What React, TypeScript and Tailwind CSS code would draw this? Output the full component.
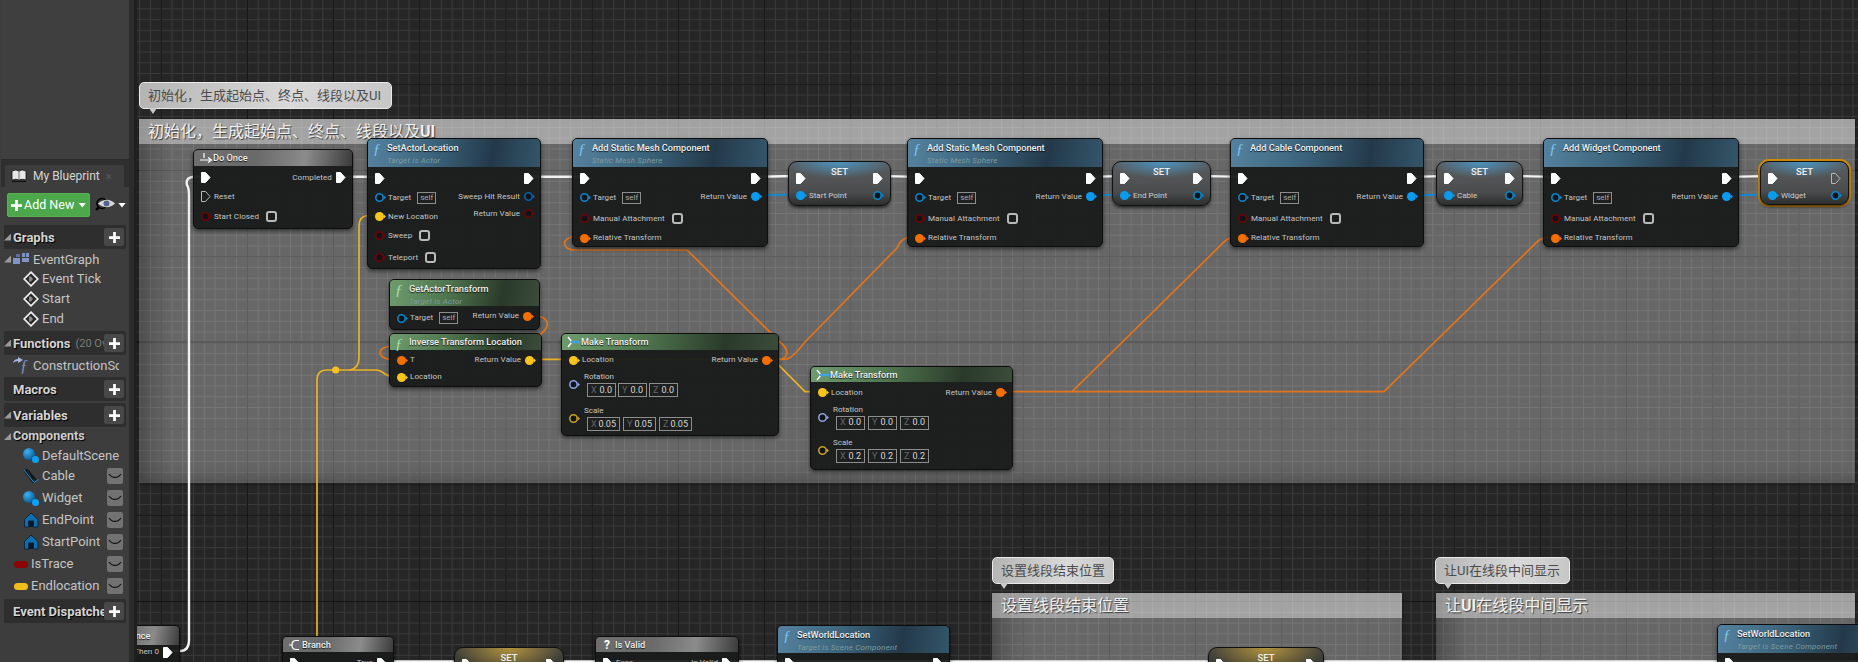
import type { ReactNode } from 'react';

const font = "font-['Roboto',_'Noto_Sans_CJK_SC',_sans-serif]";

// ---------- pins ----------
function Exec({ hollow }: { hollow?: boolean }) {
  return (
    <svg width="13" height="13" viewBox="0 0 13 13" className="shrink-0">
      <path
        d="M2.5 1.5H6.5L11 6.5L6.5 11.5H2.5Z"
        fill={hollow ? 'none' : '#ffffff'}
        stroke={hollow ? '#b8b8b8' : '#ffffff'}
        strokeWidth="1"
        strokeLinejoin="round"
      />
    </svg>
  );
}

function Dot({ color, hollow }: { color: string; hollow?: boolean }) {
  return (
    <svg width="13" height="13" viewBox="0 0 13 13" className="shrink-0">
      <path d="M10.8 4.6L13 6.5L10.8 8.4Z" fill={color} />
      <circle cx="6.5" cy="6.5" r={hollow ? 3.7 : 4.5} fill={hollow ? '#101418' : color} stroke={color} strokeWidth={hollow ? 1.6 : 0} />
    </svg>
  );
}

const objFill = <Dot color="#0a9bef" />;
const objHollow = <Dot color="#0a86cc" hollow />;
const boolPin = <Dot color="#6d0505" hollow />;
const vecFill = <Dot color="#f9c51d" />;
const xfFill = <Dot color="#f56e00" />;

function Check() {
  return <span className="ml-[5px] h-[11px] w-[11px] shrink-0 rounded-[3px] border-2 border-[#b9b9b9] bg-[#1b1d1c]" />;
}

function Self() {
  return (
    <span className="ml-[4px] flex h-[12px] w-[19px] shrink-0 items-center justify-center border border-[#8d8d8d] text-[8px] leading-none text-[#a9a9a9]">
      self
    </span>
  );
}

function Row({ h, pin, label, right, children }: { h: string; pin: ReactNode; label?: string; right?: boolean; children?: ReactNode }) {
  return (
    <div className={`flex items-center gap-[2px] ${h} ${right ? 'flex-row-reverse pr-[5px]' : 'pl-[5px]'}`}>
      {pin}
      {label && <span className="whitespace-nowrap text-[8px] leading-none tracking-[0.1px] text-[#c6c6c6]">{label}</span>}
      {children}
    </div>
  );
}

function Vec({ label, w, gap, values }: { label: string; w: string; gap: string; values: string[] }) {
  const axes = ['X', 'Y', 'Z'];
  return (
    <div className="ml-[2px] flex flex-col">
      <span className="mb-[1px] text-[8px] leading-[10px] text-[#c6c6c6]">{label}</span>
      <div className={`ml-[3px] flex ${gap}`}>
        {values.map((v, i) => (
          <span key={axes[i]} className={`flex h-[14px] items-center justify-between border border-[#8d8d8d] px-[3px] text-[9px] leading-none text-[#d8d8d8] ${w}`}>
            <span className="text-[#666666]">{axes[i]}</span>
            {v}
          </span>
        ))}
      </div>
    </div>
  );
}

// ---------- node headers ----------
const tones: Record<string, string> = {
  blue: 'bg-[linear-gradient(100deg,#55829f_0%,#3c647c_38%,#23394a_72%,#34566a_100%)]',
  green: 'bg-[linear-gradient(100deg,#6f9c6f_0%,#4f764f_38%,#2a3a2a_75%,#3b4c3b_100%)]',
  gray: 'bg-[linear-gradient(100deg,#6e6e6e_0%,#6a6a6a_40%,#8b8b8b_70%,#3b3b3b_100%)]',
};

function FuncIcon({ tone }: { tone: string }) {
  return (
    <span
      className={`absolute left-[5px] top-[1px] font-['Liberation_Serif',_serif] text-[15px] italic leading-[18px] ${
        tone === 'blue' ? 'text-[#7fc4f2]' : 'text-[#a6e0a6]'
      }`}
    >
      ƒ
    </span>
  );
}

function MacroIcon() {
  return (
    <svg width="14" height="12" viewBox="0 0 14 12" className="absolute left-[5px] top-[2px]">
      <path d="M1 1L5 6L1 11" fill="none" stroke="#ffffff" strokeWidth="1.4" />
      <path d="M4 6H13" stroke="#3fa0e8" strokeWidth="2.4" />
    </svg>
  );
}

function DoOnceIcon() {
  return (
    <svg width="14" height="12" viewBox="0 0 14 12" className="absolute left-[5px] top-[2px]">
      <path d="M1 8H11M9 5.5L12.5 8L9 10.5M5 1V6" fill="none" stroke="#ffffff" strokeWidth="1.2" />
    </svg>
  );
}

function BranchIcon() {
  return (
    <svg width="14" height="12" viewBox="0 0 14 12" className="absolute left-[5px] top-[2px]">
      <path d="M11 1.5H8C5 1.5 4 4 4 6S5 10.5 8 10.5H11M1 6H4" fill="none" stroke="#ffffff" strokeWidth="1.2" />
    </svg>
  );
}

type NodeProps = {
  box: string;
  tone: string;
  header: string;
  title: string;
  sub?: string;
  icon: ReactNode;
  titleTop: string;
  left?: ReactNode;
  right?: ReactNode;
};

function Node({ box, tone, header, title, sub, icon, titleTop, left, right }: NodeProps) {
  return (
    <div className={`absolute flex flex-col rounded-[5px] border border-[#0d0d0d] bg-[#191b1a]/95 shadow-[0_2px_4px_rgba(0,0,0,0.55)] ${box}`}>
      <div className={`relative shrink-0 rounded-t-[4px] pl-[19px] ${header} ${tones[tone]} ${titleTop}`}>
        {icon}
        <div className="whitespace-nowrap text-[9.2px] font-medium leading-[11px] text-[#f1f1f1] [text-shadow:0_1px_1px_rgba(0,0,0,0.8)]">{title}</div>
        {sub && <div className="mt-[2px] whitespace-nowrap text-[8px] italic leading-[11px] tracking-[0.2px] text-[#7f9c9c]">{sub}</div>}
      </div>
      <div className="flex justify-between">
        <div className="flex flex-col">{left}</div>
        <div className="flex flex-col">{right}</div>
      </div>
    </div>
  );
}

function SetNode({ box, label, yellow, lastHollow }: { box: string; label: string; yellow?: boolean; lastHollow?: boolean }) {
  return (
    <div
      className={`absolute rounded-[9px] border border-[#111111] shadow-[0_2px_3px_rgba(0,0,0,0.6)] ${box} ${
        yellow
          ? 'bg-[radial-gradient(ellipse_50%_55%_at_50%_0%,#b1933c_0%,#b1933c00_100%),linear-gradient(#46453c,#2c2c28)]'
          : 'bg-[radial-gradient(ellipse_55%_38%_at_50%_0%,#4a93bf_0%,#4a93bf00_100%),linear-gradient(#5a5c5d_0%,#4a4c4d_70%,#2d2e2e_100%)]'
      }`}
    >
      <div className="absolute inset-x-0 top-[4px] text-center text-[9.5px] font-medium leading-[11px] text-[#eeeeee]">SET</div>
      <div className="mt-[4px] flex h-[24px] items-center justify-between pl-[5px] pr-[6px]">
        <Exec />
        <Exec hollow={lastHollow} />
      </div>
      <div className="flex h-[11px] items-center justify-between pl-[5px] pr-[6px]">
        <div className="flex items-center gap-[2px]">
          {objFill}
          <span className="whitespace-nowrap text-[8px] leading-none text-[#cfcfcf]">{label}</span>
        </div>
        {objHollow}
      </div>
    </div>
  );
}

// ---------- comments ----------
function Bubble({ box, tail, children }: { box: string; tail: string; children: ReactNode }) {
  return (
    <div className={`absolute flex items-center whitespace-nowrap rounded-[5px] border border-[#e9e9e9] bg-[linear-gradient(100deg,#b4b4b4,#d9d9d9_60%,#c6c6c6)] pl-[8px] text-[13px] leading-none text-[#4b4b4b] ${box}`}>
      {children}
      <span className={`absolute top-full h-[6px] w-[8px] bg-[#c9c9c9] [clip-path:polygon(0_0,100%_0,50%_100%)] ${tail}`} />
    </div>
  );
}

function Comment({ box, children }: { box: string; children: ReactNode }) {
  return (
    <div className={`absolute bg-white/30 shadow-[inset_26px_0_26px_-14px_rgba(0,0,0,0.28),inset_0_-16px_20px_-12px_rgba(0,0,0,0.22),0_1px_3px_rgba(0,0,0,0.5)] ${box}`}>
      <div className="flex h-[25px] items-center whitespace-nowrap bg-white/40 pl-[9px] text-[16px] leading-none text-[#f0f0f0] [text-shadow:1px_1px_1px_rgba(0,0,0,0.65)]">
        {children}
      </div>
    </div>
  );
}

// ---------- wires ----------
const whiteWires = [
  'M172 651H180Q189 651 189 640V195Q189 188 187 185Q185 177 195 176.7H205',
  'M342 176.7H378',
  'M529 176.7H583',
  'M756 176.7C780 176.7 782 176 800 176',
  'M878 176C896 176 900 176.7 918 176.7',
  'M1090 176.7C1106 176.7 1110 176 1126 176',
  'M1197 176C1220 176 1222 176.7 1241 176.7',
  'M1412 176.7C1430 176.7 1432 176 1449 176',
  'M1511 176C1530 176 1534 176.7 1555 176.7',
  'M1728 176.7C1750 176.7 1752 176 1773 176',
  'M393 661.5H1858',
];
const blueWires = [
  'M755 195.3C776 195.3 778 194.3 800 194.3',
  'M1090 195.3C1108 195.3 1110 194.3 1126 194.3',
  'M1412 195.3C1430 195.3 1432 194.3 1449 194.3',
  'M1728 195.3C1750 195.3 1752 194.3 1773 194.3',
];
const yellowWires = [
  'M317 640V380Q317 370 327 370H376Q380 370 385 374Q389 376.7 397 376.7',
  'M350 370Q359 368 359 358V226Q359 216 368 215.5H378',
  'M529 359.3H572',
  'M572 359.3H773L805 391.7H821',
];
const orangeWires = [
  'M527 316.3C548 314 552 324 542 333L528 346H393C376 346 376 359.3 392 359.3H400',
  'M765 359.3H778C790 359.3 788 349 782 344L687 250H575C561 250 561 237 575 236.7H584',
  'M778 359.3H786C795 357 800 347 806 341L897 248C900 240 905 236.7 918 236.7',
  'M998 391.7H1072L1225 241Q1230 236.7 1241 236.7',
  'M1072 391.7H1384L1538 241Q1543 236.7 1555 236.7',
];

function MeshNode({ box, title, sub }: { box: string; title: string; sub: string }) {
  return (
    <Node
      box={box}
      tone="blue"
      header="h-[28px]"
      titleTop="pt-[3px]"
      title={title}
      sub={sub}
      icon={<FuncIcon tone="blue" />}
      left={
        <>
          <Row h="h-[22px]" pin={<Exec />} />
          <Row h="h-[17px]" pin={objHollow} label="Target">
            <Self />
          </Row>
          <Row h="h-[25px]" pin={boolPin} label="Manual Attachment">
            <Check />
          </Row>
          <Row h="h-[14px]" pin={xfFill} label="Relative Transform" />
        </>
      }
      right={
        <>
          <Row h="h-[22px]" right pin={<Exec />} />
          <Row h="h-[15px]" right pin={objFill} label="Return Value" />
        </>
      }
    />
  );
}

function Canvas() {
  return (
    <div className="relative flex-1 overflow-hidden bg-[#262626]">
      <div className="absolute left-[-137px] top-0 h-[662px] w-[1858px]">
        <svg width="1858" height="662" className="absolute left-0 top-0">
          <defs>
            <pattern id="minor" x="160.7" y="170" width="10.775" height="10.775" patternUnits="userSpaceOnUse">
              <path d="M0 0.5H10.775M0.5 0V10.775" stroke="#3a3a3a" strokeWidth="1" />
            </pattern>
            <pattern id="major" x="160.7" y="170" width="86.2" height="86.2" patternUnits="userSpaceOnUse">
              <path d="M0 0.5H86.2M0.5 0V86.2" stroke="#131313" strokeWidth="1" />
            </pattern>
          </defs>
          <rect width="1858" height="662" fill="url(#minor)" />
          <rect width="1858" height="662" fill="url(#major)" />
          <path d="M0 342H1858" stroke="#101010" strokeWidth="1.5" />
        </svg>

        <Comment box="left-[139px] top-[119px] h-[364px] w-[1716px]">
          初始化，生成起始点、终点、线段以及<b>UI</b>
        </Comment>
        <Comment box="left-[992px] top-[593px] h-[100px] w-[410px]">设置线段结束位置</Comment>
        <Comment box="left-[1436px] top-[593px] h-[100px] w-[419px]">
          让<b>UI</b>在线段中间显示
        </Comment>

        <Bubble box="left-[139px] top-[82px] h-[27px] w-[253px]" tail="left-[9px]">
          初始化，生成起始点、终点、线段以及UI
        </Bubble>
        <Bubble box="left-[992px] top-[557px] h-[27px] w-[122px]" tail="left-[7px]">
          设置线段结束位置
        </Bubble>
        <Bubble box="left-[1435px] top-[557px] h-[27px] w-[135px]" tail="left-[8px]">
          让UI在线段中间显示
        </Bubble>

        <svg width="1858" height="662" className="absolute left-0 top-0" fill="none" strokeLinecap="round">
          {yellowWires.map((d) => (
            <path key={d} d={d} stroke="#eab226" strokeWidth="1.7" />
          ))}
          {orangeWires.map((d) => (
            <path key={d} d={d} stroke="#e2741a" strokeWidth="1.7" />
          ))}
          {blueWires.map((d) => (
            <path key={d} d={d} stroke="#0a8fdc" strokeWidth="1.7" />
          ))}
          {whiteWires.map((d) => (
            <path key={d} d={d} stroke="#f2f2f2" strokeWidth="2.4" />
          ))}
          <circle cx="335.7" cy="370" r="3.6" fill="#f5c21f" />
        </svg>

        <Node
          box="left-[193px] top-[149px] h-[80px] w-[160px]"
          tone="gray"
          header="h-[16px]"
          titleTop="pt-[2px]"
          title="Do Once"
          icon={<DoOnceIcon />}
          left={
            <>
              <Row h="h-[23px]" pin={<Exec />} />
              <Row h="h-[15px]" pin={<Exec hollow />} label="Reset" />
              <Row h="h-[25px]" pin={boolPin} label="Start Closed">
                <Check />
              </Row>
            </>
          }
          right={<Row h="h-[23px]" right pin={<Exec />} label="Completed" />}
        />

        <Node
          box="left-[367px] top-[138px] h-[131px] w-[174px]"
          tone="blue"
          header="h-[28px]"
          titleTop="pt-[3px]"
          title="SetActorLocation"
          sub="Target is Actor"
          icon={<FuncIcon tone="blue" />}
          left={
            <>
              <Row h="h-[22px]" pin={<Exec />} />
              <Row h="h-[17px]" pin={objHollow} label="Target">
                <Self />
              </Row>
              <Row h="h-[21px]" pin={vecFill} label="New Location" />
              <Row h="h-[17px]" pin={boolPin} label="Sweep">
                <Check />
              </Row>
              <Row h="h-[27px]" pin={boolPin} label="Teleport">
                <Check />
              </Row>
            </>
          }
          right={
            <>
              <Row h="h-[22px]" right pin={<Exec />} />
              <Row h="h-[15px]" right pin={<Dot color="#0a5fb0" hollow />} label="Sweep Hit Result" />
              <Row h="h-[19px]" right pin={boolPin} label="Return Value" />
            </>
          }
        />

        <MeshNode box="left-[572px] top-[138px] h-[109px] w-[196px]" title="Add Static Mesh Component" sub="Static Mesh Sphere" />
        <SetNode box="left-[788px] top-[161px] h-[45px] w-[103px]" label="Start Point" />
        <MeshNode box="left-[907px] top-[138px] h-[109px] w-[196px]" title="Add Static Mesh Component" sub="Static Mesh Sphere" />
        <SetNode box="left-[1112px] top-[161px] h-[45px] w-[99px]" label="End Point" />
        <MeshNode box="left-[1230px] top-[138px] h-[109px] w-[194px]" title="Add Cable Component" sub="" />
        <SetNode box="left-[1436px] top-[161px] h-[45px] w-[87px]" label="Cable" />
        <MeshNode box="left-[1543px] top-[138px] h-[109px] w-[196px]" title="Add Widget Component" sub="" />
        <div className="absolute left-[1758px] top-[159px] h-[48px] w-[93px] rounded-[11px] border-2 border-[#cf8a06]" />
        <SetNode box="left-[1760px] top-[161px] h-[44px] w-[89px]" label="Widget" lastHollow />

        <Node
          box="left-[389px] top-[279px] h-[51px] w-[151px]"
          tone="green"
          header="h-[26px]"
          titleTop="pt-[3px]"
          title="GetActorTransform"
          sub="Target is Actor"
          icon={<FuncIcon tone="green" />}
          left={
            <Row h="h-[24px]" pin={objHollow} label="Target">
              <Self />
            </Row>
          }
          right={<Row h="h-[20px]" right pin={xfFill} label="Return Value" />}
        />

        <Node
          box="left-[389px] top-[333px] h-[54px] w-[153px]"
          tone="green"
          header="h-[16px]"
          titleTop="pt-[2px]"
          title="Inverse Transform Location"
          icon={<FuncIcon tone="green" />}
          left={
            <>
              <Row h="h-[20px]" pin={xfFill} label="T" />
              <Row h="h-[14px]" pin={vecFill} label="Location" />
            </>
          }
          right={<Row h="h-[20px]" right pin={vecFill} label="Return Value" />}
        />

        <Node
          box="left-[561px] top-[333px] h-[103px] w-[218px]"
          tone="green"
          header="h-[16px]"
          titleTop="pt-[2px]"
          title="Make Transform"
          icon={<MacroIcon />}
          left={
            <>
              <Row h="h-[20px]" pin={vecFill} label="Location" />
              <Row h="h-[29px]" pin={<Dot color="#8d9fdc" hollow />}>
                <Vec label="Rotation" w="w-[29px]" gap="gap-[2px]" values={['0.0', '0.0', '0.0']} />
              </Row>
              <Row h="h-[29px] mt-[5px]" pin={<Dot color="#c9a020" hollow />}>
                <Vec label="Scale" w="w-[33px]" gap="gap-[3px]" values={['0.05', '0.05', '0.05']} />
              </Row>
            </>
          }
          right={<Row h="h-[20px]" right pin={xfFill} label="Return Value" />}
        />

        <Node
          box="left-[810px] top-[366px] h-[104px] w-[203px]"
          tone="green"
          header="h-[15px]"
          titleTop="pt-[2px]"
          title="Make Transform"
          icon={<MacroIcon />}
          left={
            <>
              <Row h="h-[21px]" pin={vecFill} label="Location" />
              <Row h="h-[28px]" pin={<Dot color="#8d9fdc" hollow />}>
                <Vec label="Rotation" w="w-[29px]" gap="gap-[3px]" values={['0.0', '0.0', '0.0']} />
              </Row>
              <Row h="h-[29px] mt-[5px]" pin={<Dot color="#c9a020" hollow />}>
                <Vec label="Scale" w="w-[29px]" gap="gap-[3px]" values={['0.2', '0.2', '0.2']} />
              </Row>
            </>
          }
          right={<Row h="h-[21px]" right pin={xfFill} label="Return Value" />}
        />

        {/* row cut off by the bottom of the window */}
        <Node
          box="left-[90px] top-[625px] h-[60px] w-[90px]"
          tone="gray"
          header="h-[19px]"
          titleTop="pt-[4px]"
          title="Sequence"
          icon={null}
          right={<Row h="h-[14px]" right pin={<Exec />} label="Then 0" />}
        />
        <Node
          box="left-[282px] top-[636px] h-[60px] w-[112px]"
          tone="gray"
          header="h-[15px]"
          titleTop="pt-[2px]"
          title="Branch"
          icon={<BranchIcon />}
          left={<Row h="h-[22px]" pin={<Exec />} />}
          right={<Row h="h-[22px]" right pin={<Exec />} label="True" />}
        />
        <SetNode box="left-[454px] top-[647px] h-[50px] w-[110px]" label="" yellow />
        <Node
          box="left-[595px] top-[636px] h-[60px] w-[144px]"
          tone="gray"
          header="h-[15px]"
          titleTop="pt-[2px]"
          title="Is Valid"
          icon={<span className="absolute left-[8px] top-[1px] text-[12px] font-bold leading-[14px] text-white">?</span>}
          left={<Row h="h-[22px]" pin={<Exec />} label="Exec" />}
          right={<Row h="h-[22px]" right pin={<Exec />} label="Is Valid" />}
        />
        <Node
          box="left-[777px] top-[625px] h-[70px] w-[173px]"
          tone="blue"
          header="h-[27px]"
          titleTop="pt-[3px]"
          title="SetWorldLocation"
          sub="Target is Scene Component"
          icon={<FuncIcon tone="blue" />}
          left={<Row h="h-[20px]" pin={<Exec />} />}
          right={<Row h="h-[20px]" right pin={<Exec />} />}
        />
        <SetNode box="left-[1208px] top-[647px] h-[50px] w-[116px]" label="" yellow />
        <Node
          box="left-[1717px] top-[624px] h-[70px] w-[173px]"
          tone="blue"
          header="h-[28px]"
          titleTop="pt-[3px]"
          title="SetWorldLocation"
          sub="Target is Scene Component"
          icon={<FuncIcon tone="blue" />}
          left={<Row h="h-[20px]" pin={<Exec />} />}
        />
      </div>
    </div>
  );
}

// ---------- sidebar ----------
function Caret() {
  return <span className="h-[7px] w-[7px] shrink-0 bg-[#9a9a9a] [clip-path:polygon(100%_0,100%_100%,0_100%)]" />;
}

function PlusIcon({ size }: { size: string }) {
  return (
    <svg viewBox="0 0 12 12" className={`shrink-0 ${size}`}>
      <path d="M4.5 0H7.5V4.5H12V7.5H7.5V12H4.5V7.5H0V4.5H4.5Z" fill="#ffffff" />
    </svg>
  );
}

function Section({ title, caret, extra }: { title: string; caret?: boolean; extra?: string }) {
  return (
    <div className="relative mx-[3px] flex h-[24px] items-center overflow-hidden rounded-[2px] bg-[#2e2e2e]">
      <span className="flex w-[9px] shrink-0 items-center">{caret && <Caret />}</span>
      <span className="whitespace-nowrap text-[13px] font-bold leading-none text-[#d4d4d4] [text-shadow:1px_1px_1px_#000]">{title}</span>
      {extra && <span className="ml-[5px] whitespace-nowrap text-[11px] leading-none text-[#7d7d7d]">{extra}</span>}
      <span className="absolute right-[2px] top-[3px] flex h-[18px] w-[20px] items-center justify-center rounded-[2px] bg-[#484848]">
        <PlusIcon size="h-[11px] w-[11px]" />
      </span>
    </div>
  );
}

function EventIcon() {
  return (
    <svg width="16" height="16" viewBox="0 0 16 16" className="shrink-0">
      <path d="M8 1.2L14.8 8L8 14.8L1.2 8Z" fill="#2a2a2a" stroke="#f0f0f0" strokeWidth="1.7" />
      <path d="M6 5.5H8L10 8L8 10.5H6Z" fill="#8a8a8a" />
    </svg>
  );
}

function Sphere() {
  return (
    <span className="relative h-[15px] w-[16px] shrink-0">
      <span className="absolute left-0 top-0 h-[12px] w-[12px] rounded-full bg-[radial-gradient(circle_at_35%_30%,#3fb2f0,#0a5c9a_75%)]" />
      <span className="absolute bottom-0 right-0 h-[7px] w-[7px] rounded-full bg-[#0ea0f5]" />
    </span>
  );
}

function House() {
  return (
    <svg width="16" height="16" viewBox="0 0 16 16" className="shrink-0">
      <path d="M8 1L15 7.5V15H10.5V9H5.5V15H1.5V7.5Z" fill="#0e6fae" stroke="#0a2740" strokeWidth="1" />
      <path d="M6 9H10V15H6Z" fill="#061a2c" />
    </svg>
  );
}

function CableIcon() {
  return (
    <svg width="16" height="16" viewBox="0 0 16 16" className="shrink-0">
      <path d="M1 3L4 1L13 12L10 15Z" fill="#27303a" stroke="#101820" strokeWidth="1" />
      <path d="M3 2L6 8M6 2.5L10 12M8 6L13 12" fill="none" stroke="#0d1218" strokeWidth="1.2" />
      <path d="M1 2L11 14.5L15.5 11.5" fill="none" stroke="#1e8ccc" strokeWidth="1" />
    </svg>
  );
}

function Pill({ color }: { color: string }) {
  return <span className={`h-[7px] w-[14px] shrink-0 rounded-full ${color}`} />;
}

function EyeToggle() {
  return (
    <span className="absolute right-[6px] top-[3px] flex h-[16px] w-[16px] items-center justify-center rounded-[2px] bg-[#727272]">
      <svg width="14" height="8" viewBox="0 0 14 8">
        <path d="M1 2C4 6.5 10 6.5 13 2" fill="none" stroke="#111111" strokeWidth="1.1" />
      </svg>
    </span>
  );
}

function Item({ h, icon, label, pl, toggle }: { h: string; icon: ReactNode; label: string; pl: string; toggle?: boolean }) {
  return (
    <div className={`relative flex items-center gap-[3px] ${h} ${pl}`}>
      {icon}
      <span className="w-[86px] overflow-hidden whitespace-nowrap text-[13px] leading-[16px] text-[#c4c4c4]">{label}</span>
      {toggle && <EyeToggle />}
    </div>
  );
}

function Sidebar() {
  return (
    <div className="flex w-[137px] shrink-0">
      <div className="flex h-[662px] w-[129px] flex-col bg-[#3d3d3d] pl-[1px]">
        <div className="h-[160px] shrink-0 border-b border-[#2a2a2a] bg-[#3f3f3f]" />
        <div className="flex h-[27px] shrink-0 items-end bg-[#2f2f2f] pl-[4px]">
          <div className="flex h-[22px] w-[119px] items-center rounded-t-[2px] bg-[#3d3d3d] pl-[6px]">
            <svg width="16" height="14" viewBox="0 0 16 14" className="shrink-0">
              <path d="M1 2Q5 0 8 2Q11 0 15 2V11Q11 9.5 8 11Q5 9.5 1 11Z" fill="#e8e8e8" stroke="#111111" strokeWidth="0.8" />
              <path d="M8 2V11" stroke="#555555" strokeWidth="0.8" />
              <path d="M1 12.5H15" stroke="#111111" strokeWidth="1.2" />
            </svg>
            <span className="ml-[6px] text-[12px] leading-none text-[#d6d6d6]">My Blueprint</span>
            <span className="ml-[6px] text-[11px] leading-none text-[#5c5c5c]">×</span>
          </div>
        </div>
        <div className="flex items-center pl-[6px] pt-[6px]">
          <div className="flex h-[24px] w-[83px] items-center rounded-[2px] border border-[#58b055] bg-[#4ca84a] pl-[3px]">
            <PlusIcon size="h-[11px] w-[11px]" />
            <span className="ml-[2px] whitespace-nowrap text-[12.5px] leading-none text-white">Add New</span>
            <span className="ml-[4px] h-[5px] w-[8px] bg-white [clip-path:polygon(0_0,100%_0,50%_100%)]" />
          </div>
          <svg width="24" height="16" viewBox="0 0 24 16" className="ml-[3px] shrink-0">
            <path d="M3 13L6 10" stroke="#000000" strokeWidth="2.4" />
            <circle cx="9" cy="6.5" r="5" fill="none" stroke="#000000" strokeWidth="1.6" />
            <path d="M5 6.5Q14 -1 22 6.5Q14 14 5 6.5Z" fill="#d8d8d8" />
            <circle cx="13.5" cy="6.5" r="3" fill="#54648f" />
          </svg>
          <span className="ml-[1px] h-[5px] w-[8px] bg-white [clip-path:polygon(0_0,100%_0,50%_100%)]" />
        </div>
        <div className="mt-[8px]">
          <Section title="Graphs" caret />
        </div>
        <div className="flex h-[20px] items-center pl-[3px]">
          <Caret />
          <svg width="16" height="13" viewBox="0 0 16 13" className="ml-[2px] shrink-0">
            <path d="M0 5H7V11H0ZM9 0H12V4H9ZM13 0H16V4H13ZM9 5H16V9H9Z" fill="#8093c4" />
            <path d="M3 1H7V4H3Z" fill="#5f6f9c" />
          </svg>
          <span className="ml-[4px] text-[13px] leading-none text-[#c4c4c4]">EventGraph</span>
        </div>
        <Item h="h-[20px]" pl="pl-[22px]" icon={<EventIcon />} label="Event Tick" />
        <Item h="h-[20px]" pl="pl-[22px]" icon={<EventIcon />} label="Start" />
        <Item h="h-[20px]" pl="pl-[22px]" icon={<EventIcon />} label="End" />
        <div className="mt-[2px]">
          <Section title="Functions" caret extra="(20 Ov" />
        </div>
        <div className="flex h-[20px] items-center pl-[12px]">
          <span className="relative h-[16px] w-[20px] shrink-0">
            <svg width="10" height="7" viewBox="0 0 10 7" className="absolute left-0 top-0">
              <path d="M0 6Q1 2 5 2V0L10 3L5 6V4Q2 4 0 6Z" fill="#a8b6dc" />
            </svg>
            <span className="absolute left-[7px] top-[1px] font-['Liberation_Serif',_serif] text-[16px] italic leading-[16px] text-[#7f93cc]">ƒ</span>
          </span>
          <span className="w-[86px] overflow-hidden whitespace-nowrap text-[13px] leading-none text-[#c4c4c4]">ConstructionScript</span>
        </div>
        <div className="mt-[2px]">
          <Section title="Macros" />
        </div>
        <div className="mt-[2px]">
          <Section title="Variables" caret />
        </div>
        <div className="flex h-[19px] items-center pl-[3px]">
          <Caret />
          <span className="ml-[2px] text-[12.5px] font-bold leading-none text-[#cdcdcd] [text-shadow:1px_1px_1px_#000]">Components</span>
        </div>
        <Item h="h-[19px]" pl="pl-[22px]" icon={<Sphere />} label="DefaultScene" />
        <Item h="h-[22px]" pl="pl-[22px]" icon={<CableIcon />} label="Cable" toggle />
        <Item h="h-[22px]" pl="pl-[22px]" icon={<Sphere />} label="Widget" toggle />
        <Item h="h-[22px]" pl="pl-[22px]" icon={<House />} label="EndPoint" toggle />
        <Item h="h-[22px]" pl="pl-[22px]" icon={<House />} label="StartPoint" toggle />
        <Item h="h-[22px]" pl="pl-[13px]" icon={<Pill color="bg-[#8a0505]" />} label="IsTrace" toggle />
        <Item h="h-[22px]" pl="pl-[13px]" icon={<Pill color="bg-[#f2bd1c]" />} label="Endlocation" toggle />
        <div className="mt-[2px]">
          <Section title="Event Dispatchers" />
        </div>
      </div>
      <div className="h-[662px] w-[5px] bg-[#2c2c2c]" />
      <div className="h-[662px] w-[3px] bg-[#1f1f1f]" />
    </div>
  );
}

export default function App() {
  return (
    <div className={`flex h-[662px] w-[1858px] overflow-hidden ${font}`}>
      <Sidebar />
      <Canvas />
    </div>
  );
}
